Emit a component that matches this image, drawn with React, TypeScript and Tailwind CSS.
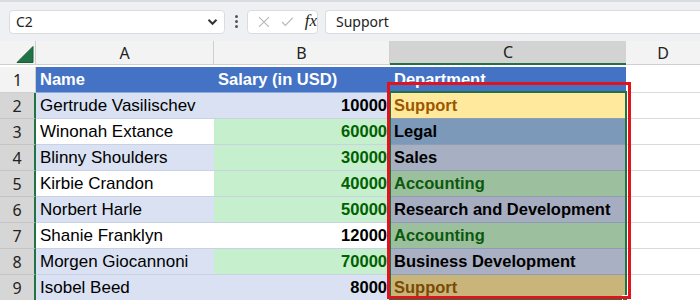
import React from 'react';

type Cell = { text: string; bg: string; color: string; bold?: boolean; right?: boolean };

const BLUE = 'bg-[#d9e1f2]';
const WHITE = 'bg-white';
const GREEN = 'bg-[#c6efce]';

const rows: { name: string; nameBg: string; salary: Cell; dept: Cell }[] = [
  { name: 'Gertrude Vasilischev', nameBg: BLUE, salary: { text: '10000', bg: BLUE, color: 'text-black' }, dept: { text: 'Support', bg: 'bg-[#ffe99d]', color: 'text-[#9c5700]' } },
  { name: 'Winonah Extance', nameBg: WHITE, salary: { text: '60000', bg: GREEN, color: 'text-[#006100]' }, dept: { text: 'Legal', bg: 'bg-[#7c99b9]', color: 'text-black' } },
  { name: 'Blinny Shoulders', nameBg: BLUE, salary: { text: '30000', bg: GREEN, color: 'text-[#006100]' }, dept: { text: 'Sales', bg: 'bg-[#a7b0c2]', color: 'text-black' } },
  { name: 'Kirbie Crandon', nameBg: WHITE, salary: { text: '40000', bg: GREEN, color: 'text-[#006100]' }, dept: { text: 'Accounting', bg: 'bg-[#9cbf9e]', color: 'text-[#0b5a0c]' } },
  { name: 'Norbert Harle', nameBg: BLUE, salary: { text: '50000', bg: GREEN, color: 'text-[#006100]' }, dept: { text: 'Research and Development', bg: 'bg-[#a7adc0]', color: 'text-black' } },
  { name: 'Shanie Franklyn', nameBg: WHITE, salary: { text: '12000', bg: WHITE, color: 'text-black' }, dept: { text: 'Accounting', bg: 'bg-[#9cbf9e]', color: 'text-[#0b5a0c]' } },
  { name: 'Morgen Giocannoni', nameBg: BLUE, salary: { text: '70000', bg: GREEN, color: 'text-[#006100]' }, dept: { text: 'Business Development', bg: 'bg-[#a9b0c3]', color: 'text-black' } },
  { name: 'Isobel Beed', nameBg: BLUE, salary: { text: '8000', bg: BLUE, color: 'text-black' }, dept: { text: 'Support', bg: 'bg-[#c9b57a]', color: 'text-[#7a4a05]' } },
];

const cellFont = { fontFamily: '"Liberation Sans", Arial, sans-serif' };
const uiFont = { fontFamily: '"Noto Sans", "Open Sans", sans-serif' };

export default function App() {
  return (
    <div className="relative w-[700px] h-[300px] overflow-hidden bg-white">
      {/* Formula bar */}
      <div className="h-[41px] bg-[#eef0f3] border-t-2 border-[#d9dbde] flex items-center gap-0 pl-[9px]" style={uiFont}>
        <div className="w-[216px] h-[24px] bg-white rounded-[4px] border border-[#dcdcdc] flex items-center justify-between pl-[6px] pr-[6px] text-[14px] text-[#222]">
          <span>C2</span>
          <svg width="11" height="8" viewBox="0 0 11 8">
            <path d="M1.5 1.8 L5.5 5.8 L9.5 1.8" fill="none" stroke="#333" strokeWidth="2" />
          </svg>
        </div>
        <div className="w-[22px] flex flex-col items-center gap-[2px]">
          <span className="w-[3px] h-[3px] rounded-full bg-[#555]" />
          <span className="w-[3px] h-[3px] rounded-full bg-[#555]" />
          <span className="w-[3px] h-[3px] rounded-full bg-[#555]" />
        </div>
        <div className="w-[71px] h-[24px] bg-white rounded-[4px] border border-[#dcdcdc] flex items-center pl-[10px] gap-[11px]">
          <svg width="12" height="12" viewBox="0 0 12 12">
            <path d="M1 1 L11 11 M11 1 L1 11" stroke="#b8b8b8" strokeWidth="1.2" fill="none" />
          </svg>
          <svg width="13" height="11" viewBox="0 0 13 11">
            <path d="M1 6 L4.5 9.5 L12 1.5" stroke="#b8b8b8" strokeWidth="1.2" fill="none" />
          </svg>
          <span className="italic text-[17px] leading-none text-[#222] -mt-[2px]" style={{ fontFamily: '"Liberation Serif", "DejaVu Serif", serif' }}>
            fx
          </span>
        </div>
        <div className="ml-[7px] flex-1 h-[24px] bg-white rounded-l-[4px] border border-r-0 border-[#dcdcdc] flex items-center pl-[10px] text-[14px] text-[#222]">
          Support
        </div>
      </div>

      {/* Sheet */}
      <div className="relative grid grid-cols-[36px_178px_176px_236px_1fr] auto-rows-[26px]">
        {/* Column headers */}
        <div className="h-[24px] bg-[#f3f3f3] border-b border-r border-[#cfcfcf] relative">
          <svg className="absolute left-[16px] top-[5px]" width="18" height="17" viewBox="0 0 18 17">
            <polygon points="1,16.5 17,16.5 17,0.5" fill="#217346" stroke="#1a5c37" strokeWidth="1" />
          </svg>
        </div>
        {['A', 'B'].map((c) => (
          <div key={c} className="h-[24px] bg-[#f3f3f3] border-b border-r border-[#cfcfcf] flex items-center justify-center text-[16px] text-[#222]" style={uiFont}>
            {c}
          </div>
        ))}
        <div className="h-[24px] bg-[#d3d3d3] border-b-2 border-[#217346] flex items-center justify-center text-[16px] text-[#222]" style={uiFont}>
          C
        </div>
        <div className="h-[24px] bg-[#f3f3f3] border-b border-[#cfcfcf] flex items-center justify-center text-[16px] text-[#222]" style={uiFont}>
          D
        </div>

        {/* Row 1 */}
        <div className="bg-[#f3f3f3] border-b border-r border-[#cfcfcf] flex items-center justify-center text-[16px] text-[#222]" style={uiFont}>
          1
        </div>
        {['Name', 'Salary (in USD)', 'Department'].map((h) => (
          <div key={h} className="bg-[#4472c4] border-b border-[#8ea9db] flex items-center pl-[4px] text-white font-bold text-[16.5px]" style={cellFont}>
            {h}
          </div>
        ))}
        <div className="bg-white border-b border-[#dadada]" />

        {rows.map((r, i) => (
          <React.Fragment key={i}>
            <div className="bg-[#d6d6d6] border-b border-[#c4c4c4] border-r-2 border-r-[#217346] flex items-center justify-center text-[16px] text-[#222]" style={uiFont}>
              {i + 2}
            </div>
            <div className={`${r.nameBg} border-b border-[#c9d2e3] flex items-center pl-[4px] text-[17px] text-black`} style={cellFont}>
              {r.name}
            </div>
            <div className={`${r.salary.bg} ${r.salary.color} border-b border-[#c9d2e3] flex items-center justify-end pr-[3px] font-bold text-[16.5px]`} style={cellFont}>
              {r.salary.text}
            </div>
            <div className={`${r.dept.bg} ${r.dept.color} border-b border-[#8e9db2] flex items-center pl-[4px] font-bold text-[16.5px]`} style={cellFont}>
              {r.dept.text}
            </div>
            <div className="bg-white border-b border-[#dadada]" />
          </React.Fragment>
        ))}

        {/* Selection outline C2:C9 */}
        <div className="absolute left-[389px] top-[50px] w-[238px] h-[210px] border-2 border-[#217346] pointer-events-none" />
        <div className="absolute left-[622px] top-[254px] w-[6px] h-[6px] bg-[#217346] border border-white pointer-events-none" />
      </div>

      {/* Red annotation box */}
      <div className="absolute left-[387px] top-[82px] w-[244px] h-[217px] border-[3px] border-[#e0141c] pointer-events-none" />
    </div>
  );
}
